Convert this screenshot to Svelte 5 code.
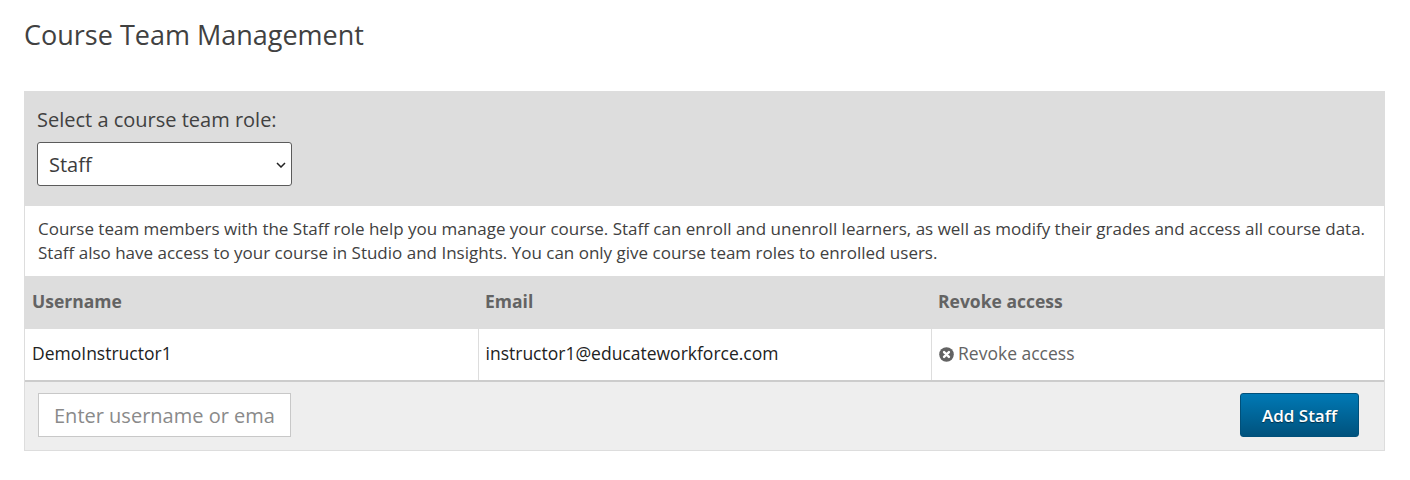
<script>
	let role = 'Staff'
	const members = [{ username: 'DemoInstructor1', email: 'instructor1@educateworkforce.com' }]
</script>

<div class="page">
	<h2>Course Team Management</h2>

	<div class="panel">
		<div class="role-select">
			<label for="role">Select a course team role:</label>
			<div class="select-wrap">
				<select id="role" bind:value={role}>
					<option>Staff</option>
					<option>Admin</option>
				</select>
				<svg class="chevron" viewBox="0 0 10 6" width="10" height="6" aria-hidden="true">
					<path d="M1 1l4 4 4-4" fill="none" stroke="#222" stroke-width="1.5" />
				</svg>
			</div>
		</div>

		<p class="desc">
			Course team members with the Staff role help you manage your course. Staff can enroll and unenroll learners, as well as modify their grades and access all course data. Staff also have access to your course in Studio and Insights. You can only give course team roles to enrolled users.
		</p>

		<table>
			<thead>
				<tr>
					<th>Username</th>
					<th>Email</th>
					<th>Revoke access</th>
				</tr>
			</thead>
			<tbody>
				{#each members as member}
					<tr>
						<td>{member.username}</td>
						<td>{member.email}</td>
						<td class="revoke">
							<svg viewBox="0 0 16 16" width="15" height="15" aria-hidden="true">
								<circle cx="8" cy="8" r="7.8" fill="#636363" />
								<path d="M5.4 5.4l5.2 5.2M10.6 5.4l-5.2 5.2" stroke="#fff" stroke-width="2.6" stroke-linecap="round" />
							</svg>
							Revoke access
						</td>
					</tr>
				{/each}
			</tbody>
		</table>

		<div class="add-row">
			<input type="text" placeholder="Enter username or email" />
			<button>Add Staff</button>
		</div>
	</div>
</div>

<style>
	:global(body) {
		background: #fff;
	}
	.page {
		padding: 0 25px 0 24px;
		font-family: "Open Sans", sans-serif;
		color: #3c3c3c;
	}
	h2 {
		margin: 0;
		padding-top: 17px;
		height: 91px;
		box-sizing: border-box;
		font-size: 27px;
		line-height: 35px;
		font-weight: 400;
		color: #414141;
	}
	.panel {
		border: 1px solid #ddd;
		border-top: none;
	}
	.role-select {
		height: 115px;
		box-sizing: border-box;
		margin: 0 -1px;
		padding: 15px 13px 0;
		background: #ddd;
	}
	label {
		display: block;
		font-size: 20px;
		line-height: 27px;
		margin-bottom: 9px;
		color: #414141;
	}
	.select-wrap {
		position: relative;
		width: 255px;
	}
	select {
		display: block;
		width: 100%;
		height: 44px;
		box-sizing: border-box;
		padding: 0 11px;
		border: 1px solid #5b5b5b;
		border-radius: 3px;
		background-color: #fff;
		appearance: none;
		font-family: inherit;
		font-size: 20px;
		color: #3c3c3c;
	}
	.chevron {
		position: absolute;
		top: 20px;
		right: 6px;
		pointer-events: none;
	}
	.desc {
		margin: 0;
		height: 70px;
		box-sizing: border-box;
		padding: 11px 13px 0;
		background: #fff;
		font-size: 17px;
		line-height: 24px;
		color: #414141;
	}
	table {
		width: 100%;
		border-collapse: collapse;
		table-layout: fixed;
		font-size: 17.5px;
		border-bottom: 2px solid #ccc;
	}
	th {
		height: 53px;
		padding: 0 7px 4px;
		box-sizing: border-box;
		background: #ddd;
		text-align: left;
		font-weight: 700;
		color: #636363;
	}
	td {
		height: 52px;
		padding: 0 7px 4px;
		box-sizing: border-box;
		background: #fff;
		color: #222;
		border-left: 1px solid #ddd;
	}
	td:first-child {
		border-left: none;
	}
	.revoke {
		color: #636363;
	}
	.revoke svg {
		vertical-align: -2px;
	}
	.add-row {
		display: flex;
		justify-content: space-between;
		align-items: center;
		height: 68px;
		box-sizing: border-box;
		padding: 0 25px 2px 13px;
		background: #eee;
	}
	input {
		width: 253px;
		height: 44px;
		box-sizing: border-box;
		padding: 0 15px;
		border: 1px solid #c8c8c8;
		background: #fff;
		font-family: inherit;
		font-size: 20px;
		color: #3c3c3c;
	}
	input::placeholder {
		color: #8a8a8a;
		opacity: 1;
	}
	button {
		width: 119px;
		height: 44px;
		border: 1px solid #00507a;
		border-radius: 3px;
		background: linear-gradient(#0079b5, #00527d);
		color: #fff;
		font-family: inherit;
		font-size: 17px;
		font-weight: 600;
		text-shadow: 0 1px 1px rgba(0, 0, 0, 0.5);
	}
</style>
